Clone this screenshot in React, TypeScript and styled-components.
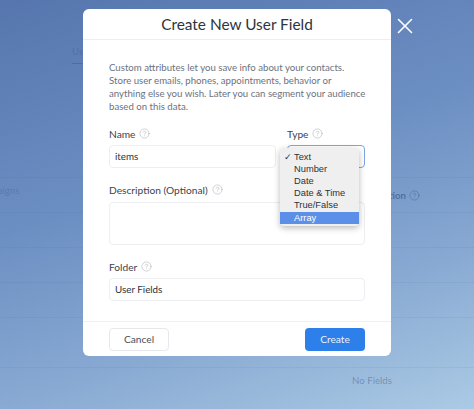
import React from 'react';
import styled, { createGlobalStyle } from 'styled-components';
import { CircleHelp, X } from 'lucide-react';

const options = ['Text', 'Number', 'Date', 'Date & Time', 'True/False', 'Array'];

const HelpIcon = () => <HelpGlyph size={11} strokeWidth={1.2} />;

const App: React.FunctionComponent = () => (
  <Page>
    <GlobalStyle />
    <Backdrop>
      <BackdropTab>Users</BackdropTab>
      <BackdropHeading>
        <BackdropCampaigns>Campaigns</BackdropCampaigns>
        <BackdropColumn>
          Description <CircleHelp size={11} strokeWidth={1.2} />
        </BackdropColumn>
      </BackdropHeading>
      <BackdropRow />
      <BackdropRow />
      <BackdropRow />
      <BackdropEmptyRow />
      <BackdropEmpty>No Fields</BackdropEmpty>
    </Backdrop>
    <Modal>
      <Header>Create New User Field</Header>
      <Body>
        <Intro>
          Custom attributes let you save info about your contacts.
          <br />
          Store user emails, phones, appointments, behavior or
          <br />
          anything else you wish. Later you can segment your audience
          <br />
          based on this data.
        </Intro>
        <Columns>
          <Field>
            <Label>
              Name <HelpIcon />
            </Label>
            <Input>items</Input>
          </Field>
          <TypeField>
            <Label>
              Type <HelpIcon />
            </Label>
            <SelectBox />
            <Menu>
              {options.map((option) => (
                <MenuItem key={option} $active={option === 'Array'}>
                  {option === 'Text' && <Check>✓</Check>}
                  {option}
                </MenuItem>
              ))}
            </Menu>
          </TypeField>
        </Columns>
        <Field>
          <Label>
            Description (Optional) <HelpIcon />
          </Label>
          <TextArea />
        </Field>
        <Field>
          <Label>
            Folder <HelpIcon />
          </Label>
          <Input>User Fields</Input>
        </Field>
      </Body>
      <Footer>
        <CancelButton>Cancel</CancelButton>
        <CreateButton>Create</CreateButton>
      </Footer>
    </Modal>
    <CloseButton>
      <X size={26} strokeWidth={1.5} color="#fff" />
    </CloseButton>
  </Page>
);

const GlobalStyle = createGlobalStyle`
  html, body {
    margin: 0;
    padding: 0;
  }
  body {
    font-family: Lato, "Liberation Sans", sans-serif;
  }
`;

const Page = styled.div`
  position: relative;
  box-sizing: border-box;
  width: 474px;
  height: 409px;
  padding: 9px 0 0 83px;
  overflow: hidden;
  background: linear-gradient(162deg, #5675ae 0%, #6c8fc3 42%, #88a9d2 72%, #abcae5 100%);
`;

const Backdrop = styled.div`
  position: absolute;
  inset: 0;
  font-size: 9.7px;
  color: rgba(50, 70, 110, 0.28);
`;

const BackdropTab = styled.div`
  box-sizing: border-box;
  width: 30px;
  height: 18px;
  margin: 46px 0 113px 72px;
  line-height: 11px;
  border-bottom: 1px solid rgba(50, 70, 110, 0.3);
  overflow: hidden;
`;

const BackdropRow = styled.div`
  height: 34px;
  border-top: 1px solid rgba(60, 90, 130, 0.08);
`;

const BackdropHeading = styled(BackdropRow)`
  display: flex;
  justify-content: space-between;
  align-items: center;
  padding-right: 54px;
`;

const BackdropCampaigns = styled.span`
  align-self: flex-start;
  margin: 6px 0 0 -27px;
`;

const BackdropColumn = styled.span`
  display: inline-flex;
  align-items: center;
  gap: 3px;
  font-weight: 700;
  color: rgba(50, 70, 110, 0.55);
`;

const BackdropEmptyRow = styled(BackdropRow)`
  height: 49px;
`;

const BackdropEmpty = styled.div`
  padding: 6px 82px 0 0;
  border-top: 1px solid rgba(60, 90, 130, 0.08);
  text-align: right;
  color: rgba(50, 70, 110, 0.4);
`;

const Modal = styled.div`
  position: relative;
  display: flex;
  flex-direction: column;
  width: 308px;
  height: 347px;
  border-radius: 6px;
  background: #fff;
`;

const Header = styled.div`
  flex: none;
  height: 30px;
  line-height: 30px;
  text-align: center;
  font-size: 15.4px;
  color: #2d3540;
  border-bottom: 1px solid #eceef1;
`;

const Body = styled.div`
  flex: 1;
  min-height: 0;
  display: flex;
  flex-direction: column;
  gap: 15px;
  padding: 21px 26px 0;
`;

const Intro = styled.p`
  margin: 0 0 -1px;
  font-size: 9.65px;
  line-height: 12.9px;
  white-space: nowrap;
  color: #6c727e;
`;

const Columns = styled.div`
  display: grid;
  grid-template-columns: 167px 78px;
  gap: 11px;
`;

const Field = styled.div`
  display: flex;
  flex-direction: column;
  gap: 4px;
`;

const TypeField = styled(Field)`
  position: relative;
`;

const Label = styled.div`
  display: flex;
  align-items: center;
  gap: 4px;
  height: 14px;
  font-size: 10.2px;
  color: #3c4350;
`;

const HelpGlyph = styled(CircleHelp)`
  color: #a9aeb6;
`;

const Input = styled.div`
  box-sizing: border-box;
  height: 23px;
  padding: 0 5px;
  line-height: 23px;
  font-size: 9.8px;
  text-rendering: geometricPrecision;
  color: #2f3540;
  border: 1px solid #eceef1;
  border-radius: 4px;
`;

const SelectBox = styled(Input)`
  border-color: #7aa6e2;
`;

const TextArea = styled(Input)`
  height: 43px;
  margin-top: 1px;
`;

const Menu = styled.div`
  position: absolute;
  top: 21px;
  left: -7px;
  box-sizing: border-box;
  width: 79px;
  height: 78px;
  padding-top: 3px;
  background: #efeff0;
  border-radius: 4px;
  box-shadow: 0 2px 6px rgba(0, 0, 0, 0.28);
`;

const MenuItem = styled.div<{ $active: boolean }>`
  position: relative;
  height: 12.2px;
  padding-left: 14px;
  line-height: 12.2px;
  font-family: "Liberation Sans", sans-serif;
  font-size: 9.3px;
  color: ${({ $active }) => ($active ? '#fff' : '#2e3238')};
  background: ${({ $active }) => ($active ? '#5b8fe8' : 'transparent')};
`;

const Check = styled.span`
  position: absolute;
  left: 4px;
`;

const Footer = styled.div`
  flex: none;
  box-sizing: border-box;
  display: flex;
  justify-content: space-between;
  align-items: flex-start;
  height: 35px;
  padding: 6px 26px 0;
  border-top: 1px solid #eff0f2;
`;

const CancelButton = styled.div`
  box-sizing: border-box;
  width: 60px;
  height: 23px;
  line-height: 21px;
  text-align: center;
  font-size: 10.2px;
  color: #4a505b;
  border: 1px solid #e6e8eb;
  border-radius: 4px;
`;

const CreateButton = styled.div`
  width: 60px;
  height: 23px;
  line-height: 23px;
  text-align: center;
  font-size: 10.2px;
  color: #eaf2fd;
  background: #2d7fea;
  border-radius: 4px;
`;

const CloseButton = styled.div`
  position: absolute;
  top: 13px;
  left: 392px;
  line-height: 0;
`;

export default App;
